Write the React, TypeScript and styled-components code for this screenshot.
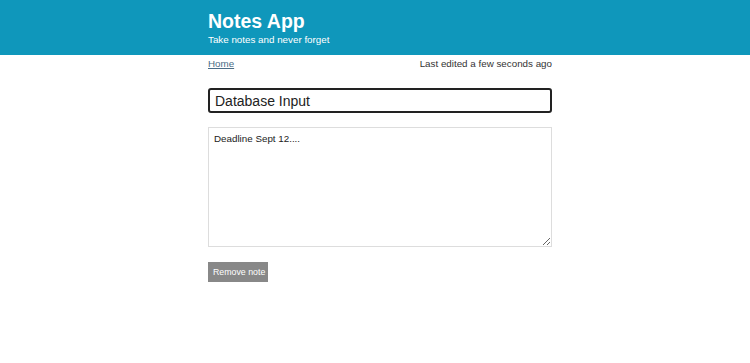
import React from 'react';
import styled, { createGlobalStyle } from 'styled-components';

const GlobalStyle = createGlobalStyle`
  html, body {
    margin: 0;
    padding: 0;
    background: #fff;
    font-family: "Liberation Sans", Arial, sans-serif;
    color: #333;
  }
`;

const App = () => {
  return (
    <>
      <GlobalStyle />
      <Header>
        <Container>
          <Title>Notes App</Title>
          <Subtitle>Take notes and never forget</Subtitle>
        </Container>
      </Header>
      <Container>
        <MetaRow>
          <HomeLink href="#">Home</HomeLink>
          <Edited>Last edited a few seconds ago</Edited>
        </MetaRow>
        <TitleInput defaultValue="Database Input" />
        <BodyInput defaultValue="Deadline Sept 12...." />
        <RemoveButton>Remove note</RemoveButton>
      </Container>
    </>
  );
};

const Header = styled.header`
  background: #0f97bb;
  height: 55px;
  box-sizing: border-box;
  padding-top: 9px;
  color: #fff;
`;

const Container = styled.div`
  width: 344px;
  margin: 0 auto;
  position: relative;
  left: 5px;
  display: flex;
  flex-direction: column;
`;

const Title = styled.h1`
  margin: 0;
  font-size: 19.5px;
  font-weight: 700;
  line-height: 24px;
`;

const Subtitle = styled.p`
  margin: 0;
  font-size: 9.8px;
  line-height: 13px;
`;

const MetaRow = styled.div`
  display: flex;
  justify-content: space-between;
  align-items: baseline;
  margin-top: 2px;
  font-size: 9.8px;
  line-height: 14px;
`;

const HomeLink = styled.a`
  color: #4b6d86;
  text-decoration: underline;
`;

const Edited = styled.span`
  color: #333;
`;

const TitleInput = styled.input`
  margin-top: 17px;
  height: 25px;
  box-sizing: border-box;
  border: 2px solid #222;
  border-radius: 3px;
  padding: 0 5px;
  font-family: "Liberation Sans", Arial, sans-serif;
  font-size: 14px;
  color: #222;
  outline: none;
`;

const BodyInput = styled.textarea`
  margin-top: 14px;
  height: 120px;
  box-sizing: border-box;
  border: 1px solid #ddd;
  padding: 4px 5px;
  font-family: "Liberation Sans", Arial, sans-serif;
  font-size: 9.8px;
  line-height: 14px;
  color: #222;
  resize: vertical;
  outline: none;
`;

const RemoveButton = styled.button`
  align-self: flex-start;
  margin-top: 15px;
  height: 20px;
  width: 60px;
  padding: 0 0 0 5px;
  text-align: left;
  border: none;
  background: #888;
  color: #fff;
  font-family: "Liberation Sans", Arial, sans-serif;
  font-size: 8.8px;
  cursor: pointer;
`;

export default App;
